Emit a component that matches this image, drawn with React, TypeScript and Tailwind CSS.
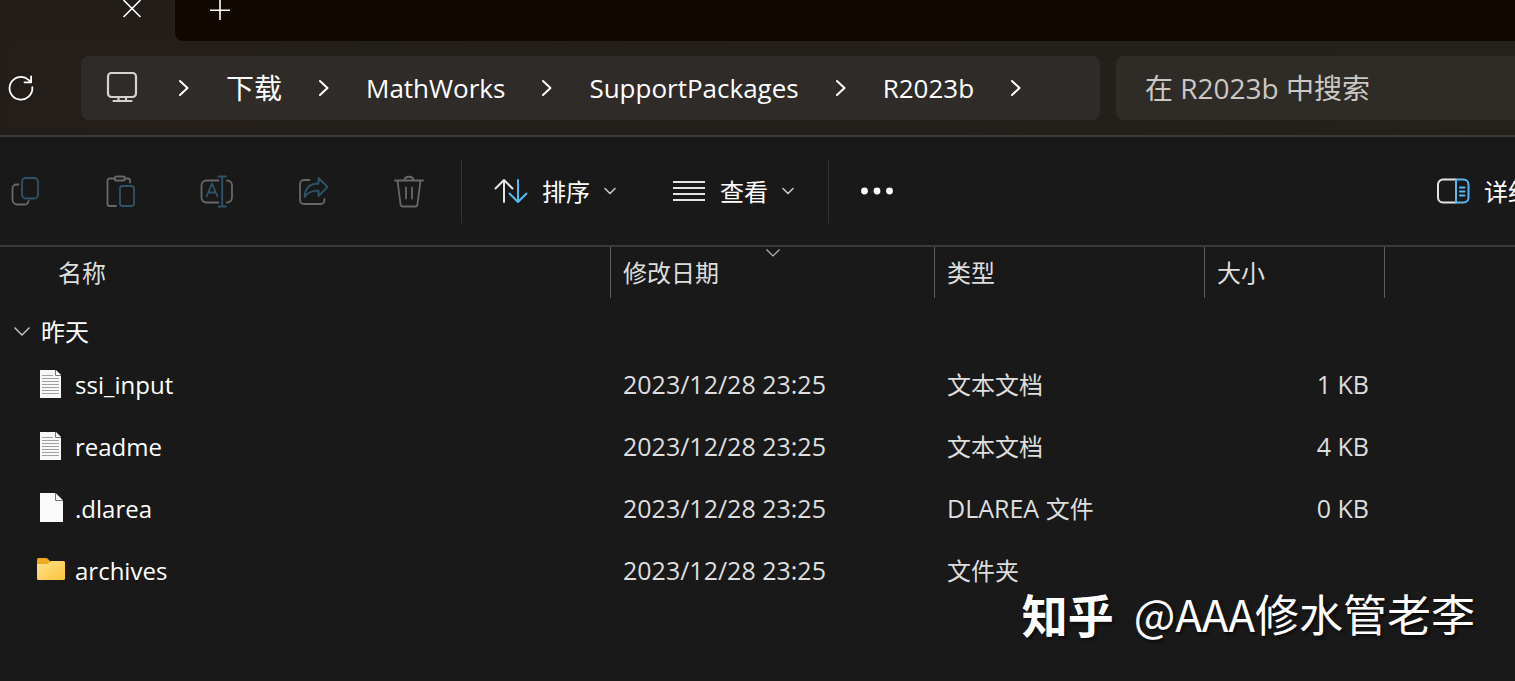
import type { ReactNode } from "react";

type FileKind = "text" | "blank" | "folder";

interface FileEntry {
  name: string;
  kind: FileKind;
  modified: string;
  ext?: string;
  type: string;
  size: string;
}

// Chinese names are set slightly larger than Latin ones
const BREADCRUMBS = [
  { label: "下载", textSize: "text-[28px]" },
  { label: "MathWorks", textSize: "text-[26px]" },
  { label: "SupportPackages", textSize: "text-[26px]" },
  { label: "R2023b", textSize: "text-[26px]" },
];

const FILES: FileEntry[] = [
  { name: "ssi_input", kind: "text", modified: "2023/12/28 23:25", type: "文本文档", size: "1 KB" },
  { name: "readme", kind: "text", modified: "2023/12/28 23:25", type: "文本文档", size: "4 KB" },
  { name: ".dlarea", kind: "blank", modified: "2023/12/28 23:25", ext: "DLAREA", type: "文件", size: "0 KB" },
  { name: "archives", kind: "folder", modified: "2023/12/28 23:25", type: "文件夹", size: "" },
];

export default function App() {
  return (
    <div className="relative min-h-screen overflow-hidden bg-[#191919] font-['Open_Sans','Noto_Sans_CJK_SC',sans-serif] text-white">
      <TabStrip />
      <AddressBar />
      <CommandBar />
      <FileTable />
      <Watermark />
    </div>
  );
}

// ── Window chrome ─────────────────────────────────────────────────────────────

function TabStrip() {
  return (
    <div className="flex h-[41px] bg-[#231e1a]">
      <div className="flex w-[175px] items-start justify-end pr-[34px]">
        <button type="button" aria-label="关闭标签页">
          <svg width="18" height="18" viewBox="0 0 18 18" fill="none" stroke="#fff" strokeWidth="1.6" strokeLinecap="round">
            <path d="M1 0.5 17 16.5M17 0.5 1 16.5" />
          </svg>
        </button>
      </div>
      <div className="flex flex-1 items-start rounded-bl-lg bg-[#0f0700] pl-[35px]">
        <button type="button" aria-label="新建标签页">
          <svg width="20" height="20" viewBox="0 0 20 20" fill="none" stroke="#fff" strokeWidth="1.6">
            <path d="M10 0v20M0 10.3h20" />
          </svg>
        </button>
      </div>
    </div>
  );
}

function AddressBar() {
  return (
    <div className="flex border-b-2 border-[#3a3a3a] bg-linear-to-r from-[#231e1a] to-[#24201a] py-[15px]">
      <div className="flex w-[81px] items-center pl-[7px]">
        <button type="button" aria-label="刷新">
          <svg width="28" height="28" viewBox="0 0 28 28" fill="none" stroke="#fff" strokeWidth="1.8" strokeLinecap="round" strokeLinejoin="round">
            <path d="M25.3 13.2A11.4 11.4 0 1 1 21.6 5.8L24 8.2" />
            <path d="M24.1 2.3v6h-6.6" />
          </svg>
        </button>
      </div>
      <nav aria-label="地址" className="flex h-16 min-w-0 flex-1 items-center gap-[37px] rounded-lg bg-[#2f2b28] pl-[21px]">
        <button type="button" aria-label="此电脑" className="flex w-10 justify-center">
          <svg width="32" height="32" viewBox="0 1 32 32" fill="none" stroke="#d6d2d0" strokeWidth="2.2" strokeLinecap="round">
            <rect x="2" y="2" width="28" height="24" rx="3.5" />
            <path d="M12.5 26v4M20 26v4M7.5 30h18" />
          </svg>
        </button>
        <CrumbChevron />
        {BREADCRUMBS.map(({ label, textSize }) => (
          <span key={label} className="flex items-center gap-[37px]">
            <a href="#" className={`leading-9 ${textSize}`}>{label}</a>
            <CrumbChevron />
          </span>
        ))}
      </nav>
      <input
        type="search"
        aria-label="搜索"
        placeholder="在 R2023b 中搜索"
        className="ml-4 h-16 w-[399px] rounded-l-lg bg-[#2f2b27] pl-[29px] text-[28px] text-white outline-none placeholder:text-[#cbc8c5]"
      />
    </div>
  );
}

function CrumbChevron() {
  return (
    <svg width="10" height="18" viewBox="0 0 10 18" fill="none" stroke="#fff" strokeWidth="2" strokeLinecap="round" strokeLinejoin="round">
      <path d="M1 2 8.5 9 1 16" />
    </svg>
  );
}

// ── Command bar ───────────────────────────────────────────────────────────────

function CommandBar() {
  return (
    <div className="flex h-[110px] items-center border-b-2 border-[#3a3a3a]">
      <div className="flex gap-15 pl-[7px]">
        <IconButton label="复制">
          <path d="M11.5 11.5H9.5a4 4 0 0 0-4 4v11a5 5 0 0 0 5 5h7a4 4 0 0 0 4-3.5" stroke="#686868" />
          <rect x="15" y="5" width="16" height="20.5" rx="4" stroke="#2f5468" />
        </IconButton>
        <IconButton label="粘贴">
          <path d="M12 5.5H6.5a2 2 0 0 0-2 2v23.5a2 2 0 0 0 2 2h6.5M22 5.5h3a2 2 0 0 1 2 2v2" stroke="#686868" />
          <rect x="11.5" y="3.5" width="10.5" height="4" rx="2" stroke="#686868" />
          <rect x="17" y="13" width="14" height="20" rx="2.5" stroke="#2f5468" />
        </IconButton>
        <IconButton label="重命名">
          <path d="M19.5 7.5H7.5a5 5 0 0 0-5 5v12a5 5 0 0 0 5 5h12M28 7.5a5 5 0 0 1 5 5v12a5 5 0 0 1-5 5" stroke="#686868" />
          <path d="M7.5 23.5 13 10.5l5.5 13M9.3 19.5h7.4" stroke="#2f5468" />
          <path d="M19.5 3.5h7.5M19.5 33.5h7.5M23.2 3.5v30" stroke="#2f5468" />
        </IconButton>
        <IconButton label="共享">
          <path d="M14.5 7H9a4 4 0 0 0-4 4v16a4 4 0 0 0 4 4h16.5a4 4 0 0 0 4-4V26" stroke="#686868" />
          <path d="M23.5 5v5.5C14.5 10.5 10 15.5 9.5 24c3.5-5 8-6.500 14-6.300v5.300L32.5 14Z" stroke="#2f5468" />
        </IconButton>
        <IconButton label="删除">
          <path d="M4 7.5h28M13.5 7.5C13.5 2.5 22.5 2.5 22.5 7.5M6.5 7.5l3 23.5a2.5 2.5 0 0 0 2.5 2.5h12a2.5 2.5 0 0 0 2.5-2.5l3-23.5M15 14.5v11M21 14.5v11" stroke="#686868" />
        </IconButton>
      </div>

      <div className="ml-[34px] h-16 w-px shrink-0 bg-[#333333]" />

      <MenuButton label="排序">
        <svg width="34" height="28" viewBox="0 0 34 28" fill="none" strokeWidth="2" strokeLinecap="round" strokeLinejoin="round">
          <path d="M10 25V3M1.5 11.5 10 3l8.5 8.5" stroke="#e4e4e4" />
          <path d="M24 3v22M15.5 16.5 24 25l8.5-8.5" stroke="#5ab8f0" />
        </svg>
      </MenuButton>
      <div className="ml-6 flex">
        <MenuButton label="查看">
          <svg width="34" height="28" viewBox="0 0 34 28" fill="none" stroke="#e4e4e4" strokeWidth="2">
            <path d="M1 5h32M1 11h32M1 17h32M1 23h32" />
          </svg>
        </MenuButton>
      </div>

      <div className="ml-[34px] h-16 w-px shrink-0 bg-[#333333]" />

      <button type="button" aria-label="查看更多" className="ml-8">
        <svg width="34" height="8" viewBox="0 0 34 8" fill="#fff">
          <circle cx="3.5" cy="4" r="3.4" />
          <circle cx="16" cy="4" r="3.4" />
          <circle cx="28.5" cy="4" r="3.4" />
        </svg>
      </button>

      {/* The label runs past the window edge */}
      <button type="button" className="ml-auto flex w-[79px] items-center gap-[14px] overflow-hidden whitespace-nowrap text-2xl">
        <svg className="shrink-0" width="34" height="26" viewBox="0 0 34 26" fill="none" strokeWidth="2" strokeLinecap="round">
          <path d="M20 1.5H7a5 5 0 0 0-5 5v13a5 5 0 0 0 5 5h13" stroke="#e4e4e4" />
          <path d="M20 1.5h7.5a5 5 0 0 1 5 5v13a5 5 0 0 1-5 5H20ZM24 9.5h4.5M24 13.5h4.5M24 17.5h4.5" stroke="#5ab8f0" />
        </svg>
        <span className="pt-0.5">详细信息</span>
      </button>
    </div>
  );
}

function IconButton({ label, children }: { label: string; children: ReactNode }) {
  return (
    <button type="button" aria-label={label} disabled>
      <svg width="36" height="36" viewBox="0 0 36 36" fill="none" strokeWidth="1.8" strokeLinecap="round" strokeLinejoin="round">
        {children}
      </svg>
    </button>
  );
}

function MenuButton({ label, children }: { label: string; children: ReactNode }) {
  return (
    <button type="button" className="ml-8 flex items-center gap-[14px] text-2xl">
      {children}
      <span className="pt-0.5">{label}</span>
      <svg width="12" height="8" viewBox="0 0 12 8" fill="none" stroke="#c8c8c8" strokeWidth="1.6" strokeLinecap="round" strokeLinejoin="round">
        <path d="M1 1.5 6 6.5l5-5" />
      </svg>
    </button>
  );
}

// ── File list ─────────────────────────────────────────────────────────────────

function FileTable() {
  return (
    <table className="w-full table-fixed border-separate border-spacing-0 text-left">
      <colgroup>
        <col className="w-[611px]" />
        <col className="w-[324px]" />
        <col className="w-[270px]" />
        <col className="w-[180px]" />
        <col />
      </colgroup>
      <thead className="text-2xl text-[#dedede]">
        <tr className="h-[51px]">
          <th scope="col" className="border-r border-[#5c5c5c] pl-[58px] font-normal">名称</th>
          <th scope="col" aria-sort="descending" className="relative border-r border-[#5c5c5c] pl-3 font-normal">
            修改日期
            <svg className="absolute top-0.5 left-1/2 -translate-x-1/2" width="14" height="8" viewBox="0 0 14 8" fill="none" stroke="#b4b4b4" strokeWidth="1.2">
              <path d="M0.5 0.5 7 7l6.5-6.5" />
            </svg>
          </th>
          <th scope="col" className="border-r border-[#5c5c5c] pl-3 font-normal">类型</th>
          <th scope="col" className="border-r border-[#5c5c5c] pl-3 font-normal">大小</th>
          <td />
        </tr>
      </thead>
      <tbody className="text-[25px] text-[#dedede]">
        <tr className="h-14">
          <th scope="rowgroup" colSpan={5} className="pt-3 pl-[14px] font-normal text-white">
            <button type="button" aria-expanded="true" className="flex items-center gap-[11px] text-2xl">
              <svg width="16" height="10" viewBox="0 0 16 10" fill="none" stroke="#c8c8c8" strokeWidth="1.4">
                <path d="M0.5 0.5 8 8 15.5 0.5" />
              </svg>
              昨天
            </button>
          </th>
        </tr>
        {FILES.map((file) => (
          <tr key={file.name} className="h-[62px]">
            <td className="pl-[37px] text-2xl text-white">
              <div className="flex items-center gap-[10px]">
                <FileIcon kind={file.kind} />
                <span>{file.name}</span>
              </div>
            </td>
            <td className="pl-3">{file.modified}</td>
            <td className="pl-3 text-2xl">
              {file.ext && <span className="text-[25px]">{file.ext} </span>}
              {file.type}
            </td>
            <td className="pr-4 text-right">{file.size}</td>
            <td />
          </tr>
        ))}
      </tbody>
    </table>
  );
}

function FileIcon({ kind }: { kind: FileKind }) {
  if (kind === "folder") {
    return (
      <svg width="28" height="32" viewBox="0 1 28 32">
        <defs>
          <linearGradient id="folder" x1="0" y1="0" x2="1" y2="1">
            <stop offset="0" stopColor="#ffe08a" />
            <stop offset="1" stopColor="#fbc53d" />
          </linearGradient>
        </defs>
        <path d="M0 5.5a1.5 1.5 0 0 1 1.5-1.5h7.5a2 2 0 0 1 1.5.6L13 7v6H0Z" fill="#eeaa1c" />
        <path d="M0 10h9.5a3 3 0 0 0 2-.8L13 7.6a2 2 0 0 1 1.4-.6h12.1A1.5 1.5 0 0 1 28 8.5v16a1.5 1.5 0 0 1-1.5 1.5h-25A1.5 1.5 0 0 1 0 24.5Z" fill="url(#folder)" />
      </svg>
    );
  }
  if (kind === "blank") {
    return (
      <svg width="28" height="32" viewBox="0 1 28 32">
        <path d="M3 1h15.5L26 8.5V30H3Z" fill="#fafafa" />
        <path d="M18.5 1v7.5H26" fill="#fff" stroke="#777" strokeWidth="1" />
      </svg>
    );
  }
  return (
    <svg width="28" height="32" viewBox="0 1 28 32">
      <path d="M3 2h16l5 5v23H3Z" fill="#f8f8f8" />
      <path d="M18.5 2v5.5H24" fill="#fff" stroke="#777" strokeWidth="1" />
      <path d="M5 7.5h11M5 10.5h17M5 13.5h17M5 16.5h17M5 19.5h17M5 22.5h17M5 25.5h17" stroke="#a0a0a0" strokeWidth="1" />
    </svg>
  );
}

function Watermark() {
  return (
    <div className="absolute right-10 bottom-9 flex items-center gap-5 font-['Noto_Sans_CJK_SC',sans-serif] text-[44px] leading-[64px] whitespace-nowrap [text-shadow:2px_2px_3px_rgba(0,0,0,0.6)]">
      <span className="text-[46px] font-bold">知乎</span>
      <span>@AAA修水管老李</span>
    </div>
  );
}
